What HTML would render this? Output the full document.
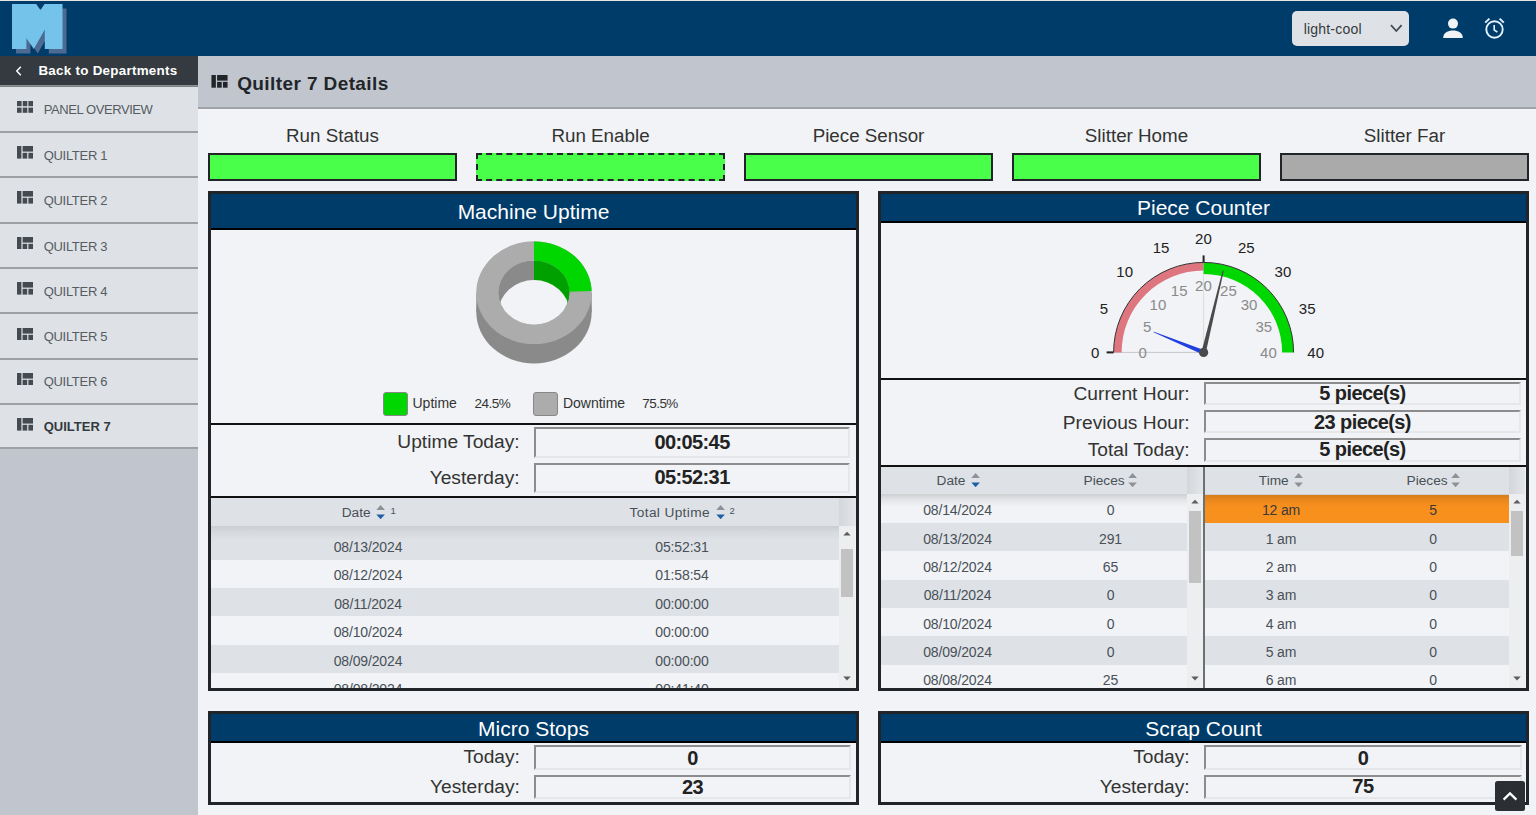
<!DOCTYPE html>
<html><head><meta charset="utf-8"><title>Quilter 7 Details</title>
<style>
html,body{margin:0;padding:0;}
body{width:1536px;height:815px;overflow:hidden;position:relative;background:#f1f3f6;font-family:"Liberation Sans", sans-serif;color:#212529;}
div{box-sizing:border-box;}
</style></head><body>

<div style="position:absolute;left:0px;top:0px;width:1536px;height:56px;background:#003c6a;"></div>
<div style="position:absolute;left:0px;top:0px;width:1536px;height:1px;background:#e7e5e2;"></div>
<svg style="position:absolute;left:0;top:0" width="80" height="56" viewBox="0 0 80 56">
<polygon fill="#4d6a92" points="16,8.5 40.3,8.5 44.4,14.8 48.5,8.5 66.5,8.5 66.5,53.5 48.8,53.5 48.8,34 37.8,53.5 30.4,42.8 30.4,53.5 16,53.5"/>
<polygon fill="#74c3ea" points="12,4 36.3,4 40.4,10.3 44.5,4 62.5,4 62.5,49 44.8,49 44.8,29.5 33.8,49 26.4,38.3 26.4,49 12,49"/>
</svg>
<div style="position:absolute;left:1292px;top:10.5px;width:116.5px;height:35.5px;background:#dee2e6;border-radius:5px;"></div>
<div style="position:absolute;left:1303.7px;top:22.35px;font-size:14px;line-height:14px;white-space:nowrap;color:#343a40;letter-spacing:0.2px;">light-cool</div>
<svg style="position:absolute;left:1388px;top:22px" width="16" height="12" viewBox="0 0 16 12">
<polyline points="3,3.2 8.3,9 13.6,3.2" fill="none" stroke="#454a50" stroke-width="1.8"/></svg>
<svg style="position:absolute;left:1440px;top:16px" width="26" height="26" viewBox="0 0 26 26">
<circle cx="13" cy="7.6" r="5" fill="#f1f3f6"/>
<path d="M3.2,22 C3.2,16.5 8,14.6 13,14.6 C18,14.6 22.8,16.5 22.8,22 Z" fill="#f1f3f6"/></svg>
<svg style="position:absolute;left:1481px;top:15px" width="27" height="27" viewBox="0 0 27 27">
<circle cx="13.5" cy="14.5" r="8.2" fill="none" stroke="#e3f1fc" stroke-width="1.9"/>
<polyline points="13.2,10 13.2,15 16.4,17.2" fill="none" stroke="#e3f1fc" stroke-width="1.6"/>
<path d="M4.2,7.6 L8.4,3.6" stroke="#e3f1fc" stroke-width="2"/>
<path d="M22.8,7.6 L18.6,3.6" stroke="#e3f1fc" stroke-width="2"/></svg>
<div style="position:absolute;left:0px;top:56px;width:198px;height:759px;background:#c1c5cd;"></div>
<div style="position:absolute;left:0px;top:56px;width:198px;height:392px;background:#dee2e6;"></div>
<div style="position:absolute;left:0px;top:56px;width:198px;height:29px;background:#343a40;"></div>
<div style="position:absolute;left:0px;top:85px;width:198px;height:1px;background:#8b9199;"></div>
<div style="position:absolute;left:0px;top:86px;width:198px;height:1px;background:#7f8081;"></div>
<svg style="position:absolute;left:13px;top:64px" width="12" height="14" viewBox="0 0 12 14">
<polyline points="7.8,2.8 3.8,7 7.8,11.2" fill="none" stroke="#fff" stroke-width="1.5"/></svg>
<div style="position:absolute;left:38.4px;top:64.26px;font-size:13.4px;line-height:13.4px;white-space:nowrap;color:#fff;font-weight:bold;letter-spacing:0.27px;">Back to Departments</div>
<div style="position:absolute;left:0px;top:131px;width:198px;height:2px;background:#9da1a6;"></div>
<svg style="position:absolute;left:17px;top:101.2px" width="16" height="12" viewBox="0 0 16 12">
<rect x="0" y="0" width="4.6" height="5.2" fill="#454a50"/><rect x="5.7" y="0" width="4.6" height="5.2" fill="#454a50"/><rect x="11.4" y="0" width="4.6" height="5.2" fill="#454a50"/>
<rect x="0" y="6.6" width="4.6" height="5.2" fill="#454a50"/><rect x="5.7" y="6.6" width="4.6" height="5.2" fill="#454a50"/><rect x="11.4" y="6.6" width="4.6" height="5.2" fill="#454a50"/></svg>
<div style="position:absolute;left:43.7px;top:102.70px;font-size:13px;line-height:13px;white-space:nowrap;color:#565c62;letter-spacing:-0.42px;">PANEL OVERVIEW</div>
<div style="position:absolute;left:0px;top:176px;width:198px;height:2px;background:#9da1a6;"></div>
<svg style="position:absolute;left:17px;top:146.1px" width="16" height="12.6" viewBox="0 0 16 12.6">
<rect x="0" y="0" width="4.4" height="12.6" fill="#454a50"/><rect x="5.6" y="0" width="10.4" height="5.6" fill="#454a50"/>
<rect x="5.6" y="6.8" width="4.6" height="5.8" fill="#454a50"/><rect x="11.4" y="6.8" width="4.6" height="5.8" fill="#454a50"/></svg>
<div style="position:absolute;left:43.7px;top:149.20px;font-size:13px;line-height:13px;white-space:nowrap;color:#565c62;letter-spacing:-0.3px;">QUILTER 1</div>
<div style="position:absolute;left:0px;top:222px;width:198px;height:2px;background:#9da1a6;"></div>
<svg style="position:absolute;left:17px;top:191.45px" width="16" height="12.6" viewBox="0 0 16 12.6">
<rect x="0" y="0" width="4.4" height="12.6" fill="#454a50"/><rect x="5.6" y="0" width="10.4" height="5.6" fill="#454a50"/>
<rect x="5.6" y="6.8" width="4.6" height="5.8" fill="#454a50"/><rect x="11.4" y="6.8" width="4.6" height="5.8" fill="#454a50"/></svg>
<div style="position:absolute;left:43.7px;top:194.37px;font-size:13px;line-height:13px;white-space:nowrap;color:#565c62;letter-spacing:-0.3px;">QUILTER 2</div>
<div style="position:absolute;left:0px;top:267px;width:198px;height:2px;background:#9da1a6;"></div>
<svg style="position:absolute;left:17px;top:236.8px" width="16" height="12.6" viewBox="0 0 16 12.6">
<rect x="0" y="0" width="4.4" height="12.6" fill="#454a50"/><rect x="5.6" y="0" width="10.4" height="5.6" fill="#454a50"/>
<rect x="5.6" y="6.8" width="4.6" height="5.8" fill="#454a50"/><rect x="11.4" y="6.8" width="4.6" height="5.8" fill="#454a50"/></svg>
<div style="position:absolute;left:43.7px;top:239.54px;font-size:13px;line-height:13px;white-space:nowrap;color:#565c62;letter-spacing:-0.3px;">QUILTER 3</div>
<div style="position:absolute;left:0px;top:312px;width:198px;height:2px;background:#9da1a6;"></div>
<svg style="position:absolute;left:17px;top:282.15px" width="16" height="12.6" viewBox="0 0 16 12.6">
<rect x="0" y="0" width="4.4" height="12.6" fill="#454a50"/><rect x="5.6" y="0" width="10.4" height="5.6" fill="#454a50"/>
<rect x="5.6" y="6.8" width="4.6" height="5.8" fill="#454a50"/><rect x="11.4" y="6.8" width="4.6" height="5.8" fill="#454a50"/></svg>
<div style="position:absolute;left:43.7px;top:284.71px;font-size:13px;line-height:13px;white-space:nowrap;color:#565c62;letter-spacing:-0.3px;">QUILTER 4</div>
<div style="position:absolute;left:0px;top:358px;width:198px;height:2px;background:#9da1a6;"></div>
<svg style="position:absolute;left:17px;top:327.5px" width="16" height="12.6" viewBox="0 0 16 12.6">
<rect x="0" y="0" width="4.4" height="12.6" fill="#454a50"/><rect x="5.6" y="0" width="10.4" height="5.6" fill="#454a50"/>
<rect x="5.6" y="6.8" width="4.6" height="5.8" fill="#454a50"/><rect x="11.4" y="6.8" width="4.6" height="5.8" fill="#454a50"/></svg>
<div style="position:absolute;left:43.7px;top:329.88px;font-size:13px;line-height:13px;white-space:nowrap;color:#565c62;letter-spacing:-0.3px;">QUILTER 5</div>
<div style="position:absolute;left:0px;top:403px;width:198px;height:2px;background:#9da1a6;"></div>
<svg style="position:absolute;left:17px;top:372.85px" width="16" height="12.6" viewBox="0 0 16 12.6">
<rect x="0" y="0" width="4.4" height="12.6" fill="#454a50"/><rect x="5.6" y="0" width="10.4" height="5.6" fill="#454a50"/>
<rect x="5.6" y="6.8" width="4.6" height="5.8" fill="#454a50"/><rect x="11.4" y="6.8" width="4.6" height="5.8" fill="#454a50"/></svg>
<div style="position:absolute;left:43.7px;top:375.05px;font-size:13px;line-height:13px;white-space:nowrap;color:#565c62;letter-spacing:-0.3px;">QUILTER 6</div>
<div style="position:absolute;left:0px;top:447px;width:198px;height:2px;background:#9da1a6;"></div>
<svg style="position:absolute;left:17px;top:418.20000000000005px" width="16" height="12.6" viewBox="0 0 16 12.6">
<rect x="0" y="0" width="4.4" height="12.6" fill="#454a50"/><rect x="5.6" y="0" width="10.4" height="5.6" fill="#454a50"/>
<rect x="5.6" y="6.8" width="4.6" height="5.8" fill="#454a50"/><rect x="11.4" y="6.8" width="4.6" height="5.8" fill="#454a50"/></svg>
<div style="position:absolute;left:43.7px;top:419.82px;font-size:13px;line-height:13px;white-space:nowrap;color:#343a40;font-weight:bold;">QUILTER 7</div>
<div style="position:absolute;left:198px;top:56px;width:1338px;height:52px;background:#c1c5cd;"></div>
<div style="position:absolute;left:198px;top:107px;width:1338px;height:2px;background:#9ea3a9;"></div>
<svg style="position:absolute;left:211px;top:75.3px" width="17" height="12.7" viewBox="0 0 16 12.6">
<rect x="0" y="0" width="4.4" height="12.6" fill="#212529"/><rect x="5.6" y="0" width="10.4" height="5.6" fill="#212529"/>
<rect x="5.6" y="6.8" width="4.6" height="5.8" fill="#212529"/><rect x="11.4" y="6.8" width="4.6" height="5.8" fill="#212529"/></svg>
<div style="position:absolute;left:237.2px;top:73.52px;font-size:19px;line-height:19px;white-space:nowrap;color:#212529;font-weight:bold;letter-spacing:0.4px;">Quilter 7 Details</div>
<div style="position:absolute;left:32.5px;width:600px;top:126.89px;font-size:18.8px;line-height:18.8px;white-space:nowrap;text-align:center;color:#333;">Run Status</div>
<div style="position:absolute;left:208px;top:153px;width:249px;height:28px;background:#4aff4a;border:2px solid #212529;"></div>
<div style="position:absolute;left:300.5px;width:600px;top:126.89px;font-size:18.8px;line-height:18.8px;white-space:nowrap;text-align:center;color:#333;">Run Enable</div>
<div style="position:absolute;left:476px;top:153px;width:249px;height:28px;background:#4aff4a;border:2px dashed #212529;"></div>
<div style="position:absolute;left:568.5px;width:600px;top:126.89px;font-size:18.8px;line-height:18.8px;white-space:nowrap;text-align:center;color:#333;">Piece Sensor</div>
<div style="position:absolute;left:744px;top:153px;width:249px;height:28px;background:#4aff4a;border:2px solid #212529;"></div>
<div style="position:absolute;left:836.5px;width:600px;top:126.89px;font-size:18.8px;line-height:18.8px;white-space:nowrap;text-align:center;color:#333;">Slitter Home</div>
<div style="position:absolute;left:1012px;top:153px;width:249px;height:28px;background:#4aff4a;border:2px solid #212529;"></div>
<div style="position:absolute;left:1104.5px;width:600px;top:126.89px;font-size:18.8px;line-height:18.8px;white-space:nowrap;text-align:center;color:#333;">Slitter Far</div>
<div style="position:absolute;left:1280px;top:153px;width:249px;height:28px;background:#aaaaaa;border:2px solid #212529;"></div>
<div style="position:absolute;left:208px;top:191px;width:651px;height:500px;border:3px solid #212529;background:#f1f3f6;"></div>
<div style="position:absolute;left:211px;top:194px;width:645px;height:36px;background:#003c6a;border-bottom:2px solid #000;"></div>
<div style="position:absolute;left:233.5px;width:600px;top:201.42px;font-size:21px;line-height:21px;white-space:nowrap;text-align:center;color:#fff;">Machine Uptime</div>
<svg style="position:absolute;left:0;top:0;overflow:visible" width="1" height="1">
<defs><clipPath id="hole"><ellipse cx="534" cy="292.7" rx="35.4" ry="32"/></clipPath></defs>
<ellipse cx="534" cy="312.09999999999997" rx="57.7" ry="51.3" fill="#8a8a8a"/>
<rect x="476.3" y="292.7" width="115.4" height="19.4" fill="#8a8a8a"/>
<path fill-rule="evenodd" fill="#acacac" d="M476.3,292.7 A57.7,51.3 0 1,0 591.7,292.7 A57.7,51.3 0 1,0 476.3,292.7 Z M498.6,292.7 A35.4,32 0 1,0 569.4,292.7 A35.4,32 0 1,0 498.6,292.7 Z"/>
<path fill="#00d600" d="M534,241.39999999999998 A57.7,51.3 0 0,1 591.67,291.09 L569.38,291.69 A35.4,32 0 0,0 534,260.7 Z"/>
<g clip-path="url(#hole)">
<ellipse cx="534" cy="292.7" rx="35.4" ry="32" fill="#8a8a8a"/>
<path fill="#00a000" d="M534,292.7 L534,258.7 L574.4,258.7 L572.38,311.09 Z"/>
<ellipse cx="534" cy="312.09999999999997" rx="35.4" ry="32" fill="#f1f3f6"/>
</g>
</svg>
<div style="position:absolute;left:383.3px;top:391.5px;width:24.4px;height:24px;background:#00d600;border:1px solid #888;border-radius:3px;"></div>
<div style="position:absolute;left:412.5px;top:396.15px;font-size:14px;line-height:14px;white-space:nowrap;color:#333;">Uptime</div>
<div style="position:absolute;left:474.6px;top:396.57px;font-size:13.5px;line-height:13.5px;white-space:nowrap;color:#333;letter-spacing:-0.55px;">24.5%</div>
<div style="position:absolute;left:533.3px;top:391.5px;width:24.4px;height:24px;background:#acacac;border:1px solid #888;border-radius:3px;"></div>
<div style="position:absolute;left:562.9px;top:396.15px;font-size:14px;line-height:14px;white-space:nowrap;color:#333;">Downtime</div>
<div style="position:absolute;left:642.3px;top:396.57px;font-size:13.5px;line-height:13.5px;white-space:nowrap;color:#333;letter-spacing:-0.55px;">75.5%</div>
<div style="position:absolute;left:211px;top:423px;width:645px;height:2px;background:#111;"></div>
<div style="position:absolute;right:1016.4px;top:432.15px;font-size:19.2px;line-height:19.2px;white-space:nowrap;text-align:right;color:#333;">Uptime Today:</div>
<div style="position:absolute;left:533.75px;top:427.2px;width:316.6px;height:31.2px;border:2px solid;border-color:#8c8c8c #e6e7e9 #e6e7e9 #8c8c8c;background:#f1f3f6;"></div>
<div style="position:absolute;left:392.04999999999995px;width:600px;top:431.57px;font-size:20px;line-height:20px;white-space:nowrap;text-align:center;color:#222;font-weight:bold;letter-spacing:-0.6px;">00:05:45</div>
<div style="position:absolute;right:1016.4px;top:467.75px;font-size:19.2px;line-height:19.2px;white-space:nowrap;text-align:right;color:#333;">Yesterday:</div>
<div style="position:absolute;left:533.75px;top:463px;width:316.6px;height:29.8px;border:2px solid;border-color:#8c8c8c #e6e7e9 #e6e7e9 #8c8c8c;background:#f1f3f6;"></div>
<div style="position:absolute;left:392.04999999999995px;width:600px;top:467.37px;font-size:20px;line-height:20px;white-space:nowrap;text-align:center;color:#222;font-weight:bold;letter-spacing:-0.6px;">05:52:31</div>
<div style="position:absolute;left:211px;top:496px;width:645px;height:2px;background:#111;"></div>
<div style="position:absolute;left:211px;top:498px;width:628px;height:28px;background:#dee2e6;"></div>
<div style="position:absolute;left:839px;top:498px;width:17px;height:28px;background:linear-gradient(90deg,#d3d6da,#e4e6e9);"></div>
<div style="position:absolute;left:211px;top:526px;width:628px;height:162px;overflow:hidden;background:linear-gradient(#dee2e6 0,#dee2e6 6px,#f1f3f6 6px);">
<div style="position:absolute;left:0;top:5.40px;width:628px;height:28.4px;background:#dee2e6;"></div>
<div style="position:absolute;left:57px;width:200px;top:14.13px;font-size:14px;line-height:14px;text-align:center;color:#495057;white-space:nowrap;letter-spacing:-0.15px;">08/13/2024</div>
<div style="position:absolute;left:371px;width:200px;top:14.13px;font-size:14px;line-height:14px;text-align:center;color:#495057;white-space:nowrap;letter-spacing:-0.15px;">05:52:31</div>
<div style="position:absolute;left:0;top:33.75px;width:628px;height:28.4px;background:#f1f3f6;"></div>
<div style="position:absolute;left:57px;width:200px;top:42.48px;font-size:14px;line-height:14px;text-align:center;color:#495057;white-space:nowrap;letter-spacing:-0.15px;">08/12/2024</div>
<div style="position:absolute;left:371px;width:200px;top:42.48px;font-size:14px;line-height:14px;text-align:center;color:#495057;white-space:nowrap;letter-spacing:-0.15px;">01:58:54</div>
<div style="position:absolute;left:0;top:62.10px;width:628px;height:28.4px;background:#dee2e6;"></div>
<div style="position:absolute;left:57px;width:200px;top:70.83px;font-size:14px;line-height:14px;text-align:center;color:#495057;white-space:nowrap;letter-spacing:-0.15px;">08/11/2024</div>
<div style="position:absolute;left:371px;width:200px;top:70.83px;font-size:14px;line-height:14px;text-align:center;color:#495057;white-space:nowrap;letter-spacing:-0.15px;">00:00:00</div>
<div style="position:absolute;left:0;top:90.45px;width:628px;height:28.4px;background:#f1f3f6;"></div>
<div style="position:absolute;left:57px;width:200px;top:99.18px;font-size:14px;line-height:14px;text-align:center;color:#495057;white-space:nowrap;letter-spacing:-0.15px;">08/10/2024</div>
<div style="position:absolute;left:371px;width:200px;top:99.18px;font-size:14px;line-height:14px;text-align:center;color:#495057;white-space:nowrap;letter-spacing:-0.15px;">00:00:00</div>
<div style="position:absolute;left:0;top:118.80px;width:628px;height:28.4px;background:#dee2e6;"></div>
<div style="position:absolute;left:57px;width:200px;top:127.53px;font-size:14px;line-height:14px;text-align:center;color:#495057;white-space:nowrap;letter-spacing:-0.15px;">08/09/2024</div>
<div style="position:absolute;left:371px;width:200px;top:127.53px;font-size:14px;line-height:14px;text-align:center;color:#495057;white-space:nowrap;letter-spacing:-0.15px;">00:00:00</div>
<div style="position:absolute;left:0;top:147.15px;width:628px;height:28.4px;background:#f1f3f6;"></div>
<div style="position:absolute;left:57px;width:200px;top:155.88px;font-size:14px;line-height:14px;text-align:center;color:#495057;white-space:nowrap;letter-spacing:-0.15px;">08/08/2024</div>
<div style="position:absolute;left:371px;width:200px;top:155.88px;font-size:14px;line-height:14px;text-align:center;color:#495057;white-space:nowrap;letter-spacing:-0.15px;">00:41:40</div>
<div style="position:absolute;left:0;top:0;width:628px;height:14px;background:linear-gradient(rgba(0,0,0,0.09),rgba(0,0,0,0.04) 40%,rgba(0,0,0,0));"></div>
</div>
<div style="position:absolute;left:341.7px;top:506.20px;font-size:13.7px;line-height:13.7px;white-space:nowrap;color:#495057;">Date</div>
<svg style="position:absolute;left:376px;top:505.1px" width="10" height="14" viewBox="0 0 10 14">
<polygon points="0.3,4.9 4.6,0 8.9,4.9" fill="#8e9297"/><polygon points="0.3,9.4 4.6,14.2 8.9,9.4" fill="#1f5fa8"/></svg>
<div style="position:absolute;left:390.4px;top:505.76px;font-size:9.5px;line-height:9.5px;white-space:nowrap;color:#495057;">1</div>
<div style="position:absolute;left:629.6px;top:506.20px;font-size:13.7px;line-height:13.7px;white-space:nowrap;color:#495057;letter-spacing:0.35px;">Total Uptime</div>
<svg style="position:absolute;left:716px;top:505.1px" width="10" height="14" viewBox="0 0 10 14">
<polygon points="0.3,4.9 4.6,0 8.9,4.9" fill="#8e9297"/><polygon points="0.3,9.4 4.6,14.2 8.9,9.4" fill="#1f5fa8"/></svg>
<div style="position:absolute;left:729.6px;top:505.76px;font-size:9.5px;line-height:9.5px;white-space:nowrap;color:#495057;">2</div>
<div style="position:absolute;left:839px;top:526px;width:16px;height:162px;background:#eceef0;"></div>
<svg style="position:absolute;left:839px;top:526px" width="16" height="162" viewBox="0 0 16 162">
<polygon points="4.3,9.6 8,5.8 11.7,9.6" fill="#5c5c5c"/>
<polygon points="4.3,150.4 8,154.4 11.7,150.4" fill="#5c5c5c"/></svg>
<div style="position:absolute;left:841px;top:549px;width:12px;height:48px;background:#c1c2c1;"></div>
<div style="position:absolute;left:878px;top:191px;width:651px;height:500px;border:3px solid #212529;background:#f1f3f6;"></div>
<div style="position:absolute;left:881px;top:194px;width:645px;height:29px;background:#003c6a;border-bottom:2px solid #000;"></div>
<div style="position:absolute;left:903.5px;width:600px;top:197.02px;font-size:21px;line-height:21px;white-space:nowrap;text-align:center;color:#fff;">Piece Counter</div>
<svg style="position:absolute;left:0;top:0;overflow:visible" width="1" height="1">
<line x1="1113.6" y1="352.4" x2="1203.6" y2="352.4" stroke="#c8c8c8" stroke-width="1"/>
<line x1="1203.6" y1="262.4" x2="1203.6" y2="352.4" stroke="#dcdcdc" stroke-width="1"/>
<path fill="#de7680" d="M1113.60,352.40 A90,90 0 0,1 1203.60,262.40 L1203.60,270.40 A82,82 0 0,0 1121.60,352.40 Z"/>
<path fill="#00d600" d="M1203.60,262.40 A90,90 0 0,1 1293.60,352.40 L1282.10,352.40 A78.5,78.5 0 0,0 1203.60,273.90 Z"/>
<path d="M1113.6,352.4 A90,90 0 0,1 1293.6,352.4" fill="none" stroke="#333" stroke-width="1"/>
<line x1="1106.6" y1="352.4" x2="1113.6" y2="352.4" stroke="#222" stroke-width="2"/>
<line x1="1203.6" y1="255.39999999999998" x2="1203.6" y2="262.4" stroke="#222" stroke-width="2"/>
<text x="1095.20" y="358.00" text-anchor="middle" font-family="Liberation Sans" font-size="15" fill="#222">0</text>
<text x="1142.70" y="358.00" text-anchor="middle" font-family="Liberation Sans" font-size="15" fill="#8a8a8a">0</text>
<text x="1103.90" y="314.10" text-anchor="middle" font-family="Liberation Sans" font-size="15" fill="#222">5</text>
<text x="1147.10" y="331.80" text-anchor="middle" font-family="Liberation Sans" font-size="15" fill="#8a8a8a">5</text>
<text x="1124.70" y="276.80" text-anchor="middle" font-family="Liberation Sans" font-size="15" fill="#222">10</text>
<text x="1157.90" y="309.80" text-anchor="middle" font-family="Liberation Sans" font-size="15" fill="#8a8a8a">10</text>
<text x="1161.00" y="252.50" text-anchor="middle" font-family="Liberation Sans" font-size="15" fill="#222">15</text>
<text x="1179.20" y="295.70" text-anchor="middle" font-family="Liberation Sans" font-size="15" fill="#8a8a8a">15</text>
<text x="1203.40" y="243.70" text-anchor="middle" font-family="Liberation Sans" font-size="15" fill="#222">20</text>
<text x="1203.40" y="291.10" text-anchor="middle" font-family="Liberation Sans" font-size="15" fill="#8a8a8a">20</text>
<text x="1246.30" y="252.50" text-anchor="middle" font-family="Liberation Sans" font-size="15" fill="#222">25</text>
<text x="1228.40" y="295.80" text-anchor="middle" font-family="Liberation Sans" font-size="15" fill="#8a8a8a">25</text>
<text x="1282.90" y="276.80" text-anchor="middle" font-family="Liberation Sans" font-size="15" fill="#222">30</text>
<text x="1249.10" y="309.80" text-anchor="middle" font-family="Liberation Sans" font-size="15" fill="#8a8a8a">30</text>
<text x="1307.20" y="314.10" text-anchor="middle" font-family="Liberation Sans" font-size="15" fill="#222">35</text>
<text x="1263.80" y="331.80" text-anchor="middle" font-family="Liberation Sans" font-size="15" fill="#8a8a8a">35</text>
<text x="1315.70" y="358.00" text-anchor="middle" font-family="Liberation Sans" font-size="15" fill="#222">40</text>
<text x="1268.40" y="358.00" text-anchor="middle" font-family="Liberation Sans" font-size="15" fill="#8a8a8a">40</text>
<polygon fill="#1f3fe0" points="1202.76,354.43 1153.48,332.29 1153.94,331.74 1204.44,350.37"/>
<polygon fill="#4a4a4a" points="1201.46,351.89 1222.63,270.58 1223.79,270.72 1205.74,352.91"/>
<circle cx="1203.6" cy="352.4" r="4.6" fill="#4a4a4a"/>
</svg>
<div style="position:absolute;left:881px;top:378.3px;width:645px;height:2px;background:#111;"></div>
<div style="position:absolute;right:346.29999999999995px;top:384.45px;font-size:19.2px;line-height:19.2px;white-space:nowrap;text-align:right;color:#333;">Current Hour:</div>
<div style="position:absolute;left:1204px;top:382px;width:317px;height:23px;border:2px solid;border-color:#8c8c8c #e6e7e9 #e6e7e9 #8c8c8c;background:#f1f3f6;"></div>
<div style="position:absolute;left:1062.5px;width:600px;top:383.17px;font-size:20px;line-height:20px;white-space:nowrap;text-align:center;color:#222;font-weight:bold;letter-spacing:-0.6px;">5 piece(s)</div>
<div style="position:absolute;right:346.29999999999995px;top:412.95px;font-size:19.2px;line-height:19.2px;white-space:nowrap;text-align:right;color:#333;">Previous Hour:</div>
<div style="position:absolute;left:1204px;top:410.2px;width:317px;height:23.2px;border:2px solid;border-color:#8c8c8c #e6e7e9 #e6e7e9 #8c8c8c;background:#f1f3f6;"></div>
<div style="position:absolute;left:1062.5px;width:600px;top:411.67px;font-size:20px;line-height:20px;white-space:nowrap;text-align:center;color:#222;font-weight:bold;letter-spacing:-0.6px;">23 piece(s)</div>
<div style="position:absolute;right:346.29999999999995px;top:440.25px;font-size:19.2px;line-height:19.2px;white-space:nowrap;text-align:right;color:#333;">Total Today:</div>
<div style="position:absolute;left:1204px;top:438.2px;width:317px;height:24px;border:2px solid;border-color:#8c8c8c #e6e7e9 #e6e7e9 #8c8c8c;background:#f1f3f6;"></div>
<div style="position:absolute;left:1062.5px;width:600px;top:438.87px;font-size:20px;line-height:20px;white-space:nowrap;text-align:center;color:#222;font-weight:bold;letter-spacing:-0.6px;">5 piece(s)</div>
<div style="position:absolute;left:881px;top:465px;width:645px;height:2px;background:#111;"></div>
<div style="position:absolute;left:881px;top:467px;width:306px;height:27px;background:#dee2e6;"></div>
<div style="position:absolute;left:881px;top:494px;width:306px;height:194px;overflow:hidden;">
<div style="position:absolute;left:0;top:0.80px;width:306px;height:28.4px;background:#f1f3f6;"></div>
<div style="position:absolute;left:-23.5px;width:200px;top:9.43px;font-size:14px;line-height:14px;text-align:center;color:#495057;white-space:nowrap;letter-spacing:-0.15px;">08/14/2024</div>
<div style="position:absolute;left:129.5px;width:200px;top:9.43px;font-size:14px;line-height:14px;text-align:center;color:#495057;white-space:nowrap;letter-spacing:-0.15px;">0</div>
<div style="position:absolute;left:0;top:29.10px;width:306px;height:28.4px;background:#dee2e6;"></div>
<div style="position:absolute;left:-23.5px;width:200px;top:37.73px;font-size:14px;line-height:14px;text-align:center;color:#495057;white-space:nowrap;letter-spacing:-0.15px;">08/13/2024</div>
<div style="position:absolute;left:129.5px;width:200px;top:37.73px;font-size:14px;line-height:14px;text-align:center;color:#495057;white-space:nowrap;letter-spacing:-0.15px;">291</div>
<div style="position:absolute;left:0;top:57.40px;width:306px;height:28.4px;background:#f1f3f6;"></div>
<div style="position:absolute;left:-23.5px;width:200px;top:66.03px;font-size:14px;line-height:14px;text-align:center;color:#495057;white-space:nowrap;letter-spacing:-0.15px;">08/12/2024</div>
<div style="position:absolute;left:129.5px;width:200px;top:66.03px;font-size:14px;line-height:14px;text-align:center;color:#495057;white-space:nowrap;letter-spacing:-0.15px;">65</div>
<div style="position:absolute;left:0;top:85.70px;width:306px;height:28.4px;background:#dee2e6;"></div>
<div style="position:absolute;left:-23.5px;width:200px;top:94.33px;font-size:14px;line-height:14px;text-align:center;color:#495057;white-space:nowrap;letter-spacing:-0.15px;">08/11/2024</div>
<div style="position:absolute;left:129.5px;width:200px;top:94.33px;font-size:14px;line-height:14px;text-align:center;color:#495057;white-space:nowrap;letter-spacing:-0.15px;">0</div>
<div style="position:absolute;left:0;top:114.00px;width:306px;height:28.4px;background:#f1f3f6;"></div>
<div style="position:absolute;left:-23.5px;width:200px;top:122.63px;font-size:14px;line-height:14px;text-align:center;color:#495057;white-space:nowrap;letter-spacing:-0.15px;">08/10/2024</div>
<div style="position:absolute;left:129.5px;width:200px;top:122.63px;font-size:14px;line-height:14px;text-align:center;color:#495057;white-space:nowrap;letter-spacing:-0.15px;">0</div>
<div style="position:absolute;left:0;top:142.30px;width:306px;height:28.4px;background:#dee2e6;"></div>
<div style="position:absolute;left:-23.5px;width:200px;top:150.93px;font-size:14px;line-height:14px;text-align:center;color:#495057;white-space:nowrap;letter-spacing:-0.15px;">08/09/2024</div>
<div style="position:absolute;left:129.5px;width:200px;top:150.93px;font-size:14px;line-height:14px;text-align:center;color:#495057;white-space:nowrap;letter-spacing:-0.15px;">0</div>
<div style="position:absolute;left:0;top:170.60px;width:306px;height:28.4px;background:#f1f3f6;"></div>
<div style="position:absolute;left:-23.5px;width:200px;top:179.23px;font-size:14px;line-height:14px;text-align:center;color:#495057;white-space:nowrap;letter-spacing:-0.15px;">08/08/2024</div>
<div style="position:absolute;left:129.5px;width:200px;top:179.23px;font-size:14px;line-height:14px;text-align:center;color:#495057;white-space:nowrap;letter-spacing:-0.15px;">25</div>
<div style="position:absolute;left:0;top:0;width:306px;height:13px;background:linear-gradient(rgba(0,0,0,0.15),rgba(0,0,0,0.06) 45%,rgba(0,0,0,0));"></div>
</div>
<div style="position:absolute;left:936.5px;top:473.90px;font-size:13.7px;line-height:13.7px;white-space:nowrap;color:#495057;">Date</div>
<svg style="position:absolute;left:970.6px;top:473.2px" width="10" height="14" viewBox="0 0 10 14">
<polygon points="0.3,4.9 4.6,0 8.9,4.9" fill="#8e9297"/><polygon points="0.3,9.4 4.6,14.2 8.9,9.4" fill="#1f5fa8"/></svg>
<div style="position:absolute;left:1083.5px;top:473.90px;font-size:13.7px;line-height:13.7px;white-space:nowrap;color:#495057;">Pieces</div>
<svg style="position:absolute;left:1128.4px;top:473.2px" width="10" height="14" viewBox="0 0 10 14">
<polygon points="0.3,4.9 4.6,0 8.9,4.9" fill="#8e9297"/><polygon points="0.3,9.4 4.6,14.2 8.9,9.4" fill="#8e9297"/></svg>
<div style="position:absolute;left:1187px;top:494px;width:16px;height:194px;background:#eceef0;"></div>
<svg style="position:absolute;left:1187px;top:494px" width="16" height="194" viewBox="0 0 16 194">
<polygon points="4.3,9.6 8,5.8 11.7,9.6" fill="#5c5c5c"/>
<polygon points="4.3,182.4 8,186.4 11.7,182.4" fill="#5c5c5c"/></svg>
<div style="position:absolute;left:1189px;top:511px;width:12px;height:72px;background:#c1c2c1;"></div>
<div style="position:absolute;left:1187px;top:467px;width:16px;height:27px;background:linear-gradient(90deg,#d3d6da,#e4e6e9);"></div>
<div style="position:absolute;left:1203px;top:467px;width:2px;height:221px;background:#6b7075;"></div>
<div style="position:absolute;left:1205px;top:467px;width:304px;height:27px;background:#dee2e6;"></div>
<div style="position:absolute;left:1205px;top:494px;width:304px;height:194px;overflow:hidden;">
<div style="position:absolute;left:0;top:0.80px;width:304px;height:28.4px;background:#f8901e;"></div>
<div style="position:absolute;left:-24.0px;width:200px;top:9.43px;font-size:14px;line-height:14px;text-align:center;color:#3a3a3a;white-space:nowrap;letter-spacing:-0.15px;">12 am</div>
<div style="position:absolute;left:128.0px;width:200px;top:9.43px;font-size:14px;line-height:14px;text-align:center;color:#3a3a3a;white-space:nowrap;letter-spacing:-0.15px;">5</div>
<div style="position:absolute;left:0;top:29.10px;width:304px;height:28.4px;background:#dee2e6;"></div>
<div style="position:absolute;left:-24.0px;width:200px;top:37.73px;font-size:14px;line-height:14px;text-align:center;color:#495057;white-space:nowrap;letter-spacing:-0.15px;">1 am</div>
<div style="position:absolute;left:128.0px;width:200px;top:37.73px;font-size:14px;line-height:14px;text-align:center;color:#495057;white-space:nowrap;letter-spacing:-0.15px;">0</div>
<div style="position:absolute;left:0;top:57.40px;width:304px;height:28.4px;background:#f1f3f6;"></div>
<div style="position:absolute;left:-24.0px;width:200px;top:66.03px;font-size:14px;line-height:14px;text-align:center;color:#495057;white-space:nowrap;letter-spacing:-0.15px;">2 am</div>
<div style="position:absolute;left:128.0px;width:200px;top:66.03px;font-size:14px;line-height:14px;text-align:center;color:#495057;white-space:nowrap;letter-spacing:-0.15px;">0</div>
<div style="position:absolute;left:0;top:85.70px;width:304px;height:28.4px;background:#dee2e6;"></div>
<div style="position:absolute;left:-24.0px;width:200px;top:94.33px;font-size:14px;line-height:14px;text-align:center;color:#495057;white-space:nowrap;letter-spacing:-0.15px;">3 am</div>
<div style="position:absolute;left:128.0px;width:200px;top:94.33px;font-size:14px;line-height:14px;text-align:center;color:#495057;white-space:nowrap;letter-spacing:-0.15px;">0</div>
<div style="position:absolute;left:0;top:114.00px;width:304px;height:28.4px;background:#f1f3f6;"></div>
<div style="position:absolute;left:-24.0px;width:200px;top:122.63px;font-size:14px;line-height:14px;text-align:center;color:#495057;white-space:nowrap;letter-spacing:-0.15px;">4 am</div>
<div style="position:absolute;left:128.0px;width:200px;top:122.63px;font-size:14px;line-height:14px;text-align:center;color:#495057;white-space:nowrap;letter-spacing:-0.15px;">0</div>
<div style="position:absolute;left:0;top:142.30px;width:304px;height:28.4px;background:#dee2e6;"></div>
<div style="position:absolute;left:-24.0px;width:200px;top:150.93px;font-size:14px;line-height:14px;text-align:center;color:#495057;white-space:nowrap;letter-spacing:-0.15px;">5 am</div>
<div style="position:absolute;left:128.0px;width:200px;top:150.93px;font-size:14px;line-height:14px;text-align:center;color:#495057;white-space:nowrap;letter-spacing:-0.15px;">0</div>
<div style="position:absolute;left:0;top:170.60px;width:304px;height:28.4px;background:#f1f3f6;"></div>
<div style="position:absolute;left:-24.0px;width:200px;top:179.23px;font-size:14px;line-height:14px;text-align:center;color:#495057;white-space:nowrap;letter-spacing:-0.15px;">6 am</div>
<div style="position:absolute;left:128.0px;width:200px;top:179.23px;font-size:14px;line-height:14px;text-align:center;color:#495057;white-space:nowrap;letter-spacing:-0.15px;">0</div>
<div style="position:absolute;left:0;top:0;width:304px;height:13px;background:linear-gradient(rgba(0,0,0,0.15),rgba(0,0,0,0.06) 45%,rgba(0,0,0,0));"></div>
</div>
<div style="position:absolute;left:1258.8px;top:473.90px;font-size:13.7px;line-height:13.7px;white-space:nowrap;color:#495057;">Time</div>
<svg style="position:absolute;left:1294.3px;top:473.2px" width="10" height="14" viewBox="0 0 10 14">
<polygon points="0.3,4.9 4.6,0 8.9,4.9" fill="#8e9297"/><polygon points="0.3,9.4 4.6,14.2 8.9,9.4" fill="#8e9297"/></svg>
<div style="position:absolute;left:1406.5px;top:473.90px;font-size:13.7px;line-height:13.7px;white-space:nowrap;color:#495057;">Pieces</div>
<svg style="position:absolute;left:1451.1px;top:473.2px" width="10" height="14" viewBox="0 0 10 14">
<polygon points="0.3,4.9 4.6,0 8.9,4.9" fill="#8e9297"/><polygon points="0.3,9.4 4.6,14.2 8.9,9.4" fill="#8e9297"/></svg>
<div style="position:absolute;left:1509px;top:494px;width:16px;height:194px;background:#eceef0;"></div>
<svg style="position:absolute;left:1509px;top:494px" width="16" height="194" viewBox="0 0 16 194">
<polygon points="4.3,9.6 8,5.8 11.7,9.6" fill="#5c5c5c"/>
<polygon points="4.3,182.4 8,186.4 11.7,182.4" fill="#5c5c5c"/></svg>
<div style="position:absolute;left:1511px;top:511px;width:12px;height:45px;background:#c1c2c1;"></div>
<div style="position:absolute;left:1509px;top:467px;width:16px;height:27px;background:linear-gradient(90deg,#d3d6da,#e4e6e9);"></div>
<div style="position:absolute;left:208px;top:710.5px;width:651px;height:94px;border:3px solid #212529;background:#f1f3f6;"></div>
<div style="position:absolute;left:211px;top:713.5px;width:645px;height:29.5px;background:#003c6a;border-bottom:2px solid #000;"></div>
<div style="position:absolute;left:233.5px;width:600px;top:717.82px;font-size:21px;line-height:21px;white-space:nowrap;text-align:center;color:#fff;">Micro Stops</div>
<div style="position:absolute;right:1016.0999999999999px;top:747.45px;font-size:19.2px;line-height:19.2px;white-space:nowrap;text-align:right;color:#333;">Today:</div>
<div style="position:absolute;left:533.6px;top:745.3px;width:317.7px;height:25.2px;border:2px solid;border-color:#8c8c8c #e6e7e9 #e6e7e9 #8c8c8c;background:#f1f3f6;"></div>
<div style="position:absolute;left:392.45000000000005px;width:600px;top:748.07px;font-size:20px;line-height:20px;white-space:nowrap;text-align:center;color:#222;font-weight:bold;letter-spacing:-0.6px;">0</div>
<div style="position:absolute;right:1016.0999999999999px;top:777.05px;font-size:19.2px;line-height:19.2px;white-space:nowrap;text-align:right;color:#333;">Yesterday:</div>
<div style="position:absolute;left:533.6px;top:774.6px;width:317.7px;height:24.9px;border:2px solid;border-color:#8c8c8c #e6e7e9 #e6e7e9 #8c8c8c;background:#f1f3f6;"></div>
<div style="position:absolute;left:392.45000000000005px;width:600px;top:776.87px;font-size:20px;line-height:20px;white-space:nowrap;text-align:center;color:#222;font-weight:bold;letter-spacing:-0.6px;">23</div>
<div style="position:absolute;left:878px;top:710.5px;width:651px;height:94px;border:3px solid #212529;background:#f1f3f6;"></div>
<div style="position:absolute;left:881px;top:713.5px;width:645px;height:29.5px;background:#003c6a;border-bottom:2px solid #000;"></div>
<div style="position:absolute;left:903.5px;width:600px;top:717.82px;font-size:21px;line-height:21px;white-space:nowrap;text-align:center;color:#fff;">Scrap Count</div>
<div style="position:absolute;right:346.29999999999995px;top:747.45px;font-size:19.2px;line-height:19.2px;white-space:nowrap;text-align:right;color:#333;">Today:</div>
<div style="position:absolute;left:1204px;top:745.3px;width:317.8px;height:24.4px;border:2px solid;border-color:#8c8c8c #e6e7e9 #e6e7e9 #8c8c8c;background:#f1f3f6;"></div>
<div style="position:absolute;left:1062.9px;width:600px;top:747.67px;font-size:20px;line-height:20px;white-space:nowrap;text-align:center;color:#222;font-weight:bold;letter-spacing:-0.6px;">0</div>
<div style="position:absolute;right:346.29999999999995px;top:777.05px;font-size:19.2px;line-height:19.2px;white-space:nowrap;text-align:right;color:#333;">Yesterday:</div>
<div style="position:absolute;left:1204px;top:774.6px;width:317.8px;height:24.4px;border:2px solid;border-color:#8c8c8c #e6e7e9 #e6e7e9 #8c8c8c;background:#f1f3f6;"></div>
<div style="position:absolute;left:1062.9px;width:600px;top:776.27px;font-size:20px;line-height:20px;white-space:nowrap;text-align:center;color:#222;font-weight:bold;letter-spacing:-0.6px;">75</div>
<div style="position:absolute;left:1495.4px;top:781.2px;width:30px;height:29.5px;background:#2b2f33;border-radius:2.5px;"></div>
<svg style="position:absolute;left:1495px;top:781px" width="30" height="30" viewBox="0 0 30 30">
<polyline points="8.6,18.6 15,12.4 21.4,18.6" fill="none" stroke="#fff" stroke-width="2.2"/></svg>
</body></html>
